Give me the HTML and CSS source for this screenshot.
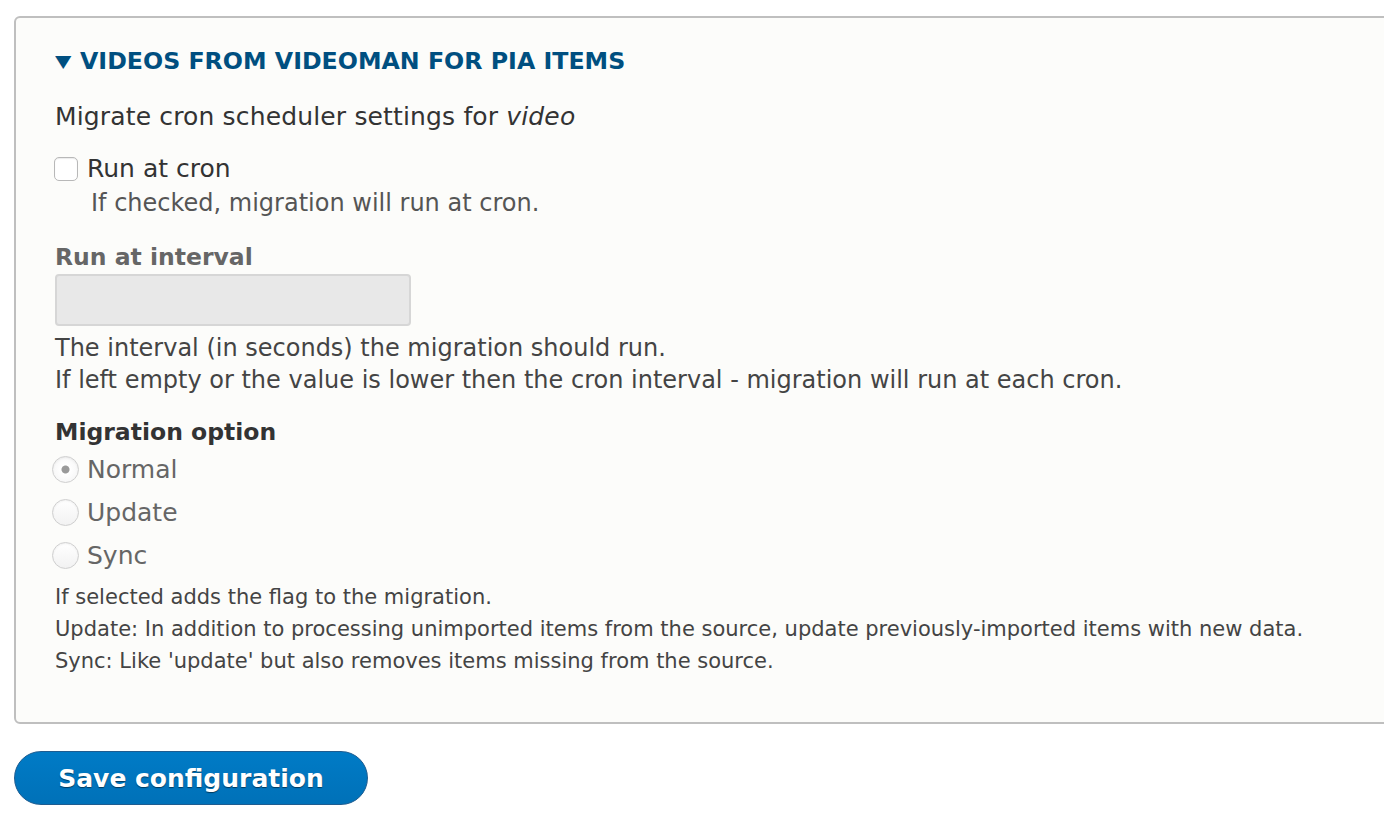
FILE: index.html
```html
<!DOCTYPE html>
<html>
<head>
    <link rel="stylesheet" href="styles.css">
</head>
<body>
    <form class="page">
        <div class="fieldset">
            <div class="summary"><span class="arrow">&#9660;</span>Videos from Videoman for PIA items</div>
            <div class="intro">Migrate cron scheduler settings for <em>video</em></div>

            <label class="check-row">
                <input type="checkbox" class="checkbox">
                <span>Run at cron</span>
            </label>
            <div class="check-desc">If checked, migration will run at cron.</div>

            <div class="field-label muted">Run at interval</div>
            <input type="text" class="text-input" disabled>
            <div class="description">
                The interval (in seconds) the migration should run.<br>
                If left empty or the value is lower then the cron interval - migration will run at each cron.
            </div>

            <div class="field-label">Migration option</div>
            <div class="radios">
                <label class="radio-row">
                    <input type="radio" name="option" class="radio" checked disabled>
                    <span>Normal</span>
                </label>
                <label class="radio-row">
                    <input type="radio" name="option" class="radio" disabled>
                    <span>Update</span>
                </label>
                <label class="radio-row">
                    <input type="radio" name="option" class="radio" disabled>
                    <span>Sync</span>
                </label>
            </div>
            <div class="small-desc">
                If selected adds the flag to the migration.<br>
                Update: In addition to processing unimported items from the source, update previously-imported items with new data.<br>
                Sync: Like 'update' but also removes items missing from the source.
            </div>
        </div>

        <button type="button" class="button-primary">Save configuration</button>
    </form>
</body>
</html>
```

FILE: styles.css
```css
body {
    margin: 0;
    background-color: #ffffff;
    font-family: "DejaVu Sans", sans-serif;
    color: #333333;
    overflow: hidden;
}

.page {
    padding: 16px 0 0 14px;
}

.fieldset {
    width: 1400px;
    border: 2px solid #bfbfbf;
    border-radius: 6px;
    background-color: #fcfcfa;
    padding: 28px 0 45px 39px;
}

.summary {
    display: flex;
    align-items: center;
    font-size: 23.7px;
    line-height: 30px;
    font-weight: bold;
    text-transform: uppercase;
    color: #004f80;
}

.arrow {
    display: inline-block;
    width: 15px;
    margin-right: 10px;
    font-size: 17px;
    transform: scaleX(1.25);
    transform-origin: left center;
}

.intro {
    margin-top: 25px;
    font-size: 25px;
    letter-spacing: 0.15px;
    line-height: 32px;
}

.check-row {
    display: flex;
    align-items: center;
    margin-top: 20px;
    font-size: 25px;
    line-height: 32px;
}

.checkbox {
    appearance: none;
    width: 24px;
    height: 24px;
    margin: 0 9px 0 -1px;
    border: 1px solid #b8b8b8;
    border-radius: 5px;
    background-color: #ffffff;
    box-shadow: inset 0 1px 1px rgba(0, 0, 0, 0.08);
}

.check-desc {
    margin: 2px 0 0 36px;
    font-size: 24px;
    line-height: 32px;
    color: #555555;
}

.field-label {
    margin-top: 22px;
    font-size: 23.5px;
    line-height: 32px;
    font-weight: bold;
}

.field-label + .radios {
    margin-top: 0;
}

.muted {
    color: #666666;
}

.text-input {
    display: block;
    box-sizing: border-box;
    width: 356px;
    height: 52px;
    margin-top: 1px;
    border: 2px solid #d6d6d6;
    border-radius: 4px;
    background-color: #e8e8e8;
}

.description {
    margin-top: 6px;
    margin-bottom: -2px;
    font-size: 24px;
    line-height: 32px;
    color: #444444;
}

.radio-row {
    display: flex;
    align-items: center;
    height: 43px;
    font-size: 25px;
    color: #666666;
}

.radio {
    appearance: none;
    width: 27px;
    height: 27px;
    margin: 0 8px 0 -3px;
    border: 1px solid #cfcfcf;
    border-radius: 50%;
    background: linear-gradient(#ffffff, #f2f2f2);
    box-shadow: inset 0 1px 2px rgba(0, 0, 0, 0.06);
}

.radio:checked {
    background: radial-gradient(circle, #9a9a9a 0 3.5px, #ffffff 4.5px, #f2f2f2 100%);
}

.small-desc {
    margin-top: 4px;
    font-size: 21px;
    line-height: 32px;
    color: #444444;
}

.button-primary {
    display: block;
    margin-top: 27px;
    width: 354px;
    height: 54px;
    border: 1px solid #1e5c90;
    border-radius: 27px;
    background: linear-gradient(#007bc6, #0071b8);
    font-family: "DejaVu Sans", sans-serif;
    font-size: 25px;
    font-weight: bold;
    color: #ffffff;
    text-shadow: 0 1px 1px rgba(0, 0, 0, 0.5);
}
```
